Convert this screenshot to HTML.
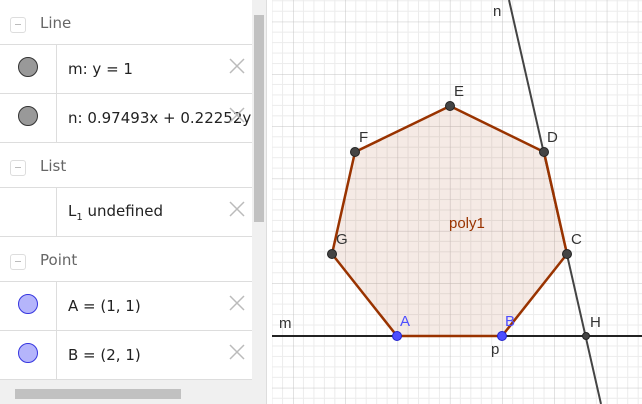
<!DOCTYPE html>
<html><head><style>
body{margin:0;width:642px;height:404px;overflow:hidden;font-family:"DejaVu Sans","Liberation Sans",sans-serif;background:#fff;position:relative}
.p{position:absolute;left:0;top:0;width:252px;height:404px;overflow:hidden}
.h{position:absolute;left:0;width:252px;height:44px;border-bottom:1px solid #ddd;color:#666;font-size:15px}
.h .b{position:absolute;left:10px;width:14px;height:14px;border:1px solid #ddd;border-radius:3px}
.h .b:after{content:"";position:absolute;left:4px;top:6px;width:6px;height:1px;background:#bbb}
.h span{position:absolute;left:40px}
.r{position:absolute;left:0;width:252px;border-bottom:1px solid #ddd}
.r .l{position:absolute;left:56px;top:0;bottom:0;border-left:1px solid #ddd}
.r .c{position:absolute;left:18px;width:18px;height:18px;border-radius:50%;border:1px solid #333;background:#999}
.r .c.bl{background:#b5b5fb;border-color:#3636e0}
.r .t{position:absolute;left:68px;font-size:15px;color:#222;white-space:nowrap}
.r .x{position:absolute;left:228px;width:18px;height:18px}
</style></head><body>
<div class="p">
<div class="h" style="top:0"><div class="b" style="top:17px"></div><span style="top:14px">Line</span></div>
<div class="r" style="top:45px;height:48px"><div class="l"></div><div class="c" style="top:12px"></div><div class="t" style="top:15px">m: y = 1</div><svg class="x" style="top:12px"><path d="M2 2L16 16M16 2L2 16" stroke="#bbb" stroke-width="1.5"/></svg></div>
<div class="r" style="top:94px;height:48px"><div class="l"></div><div class="c" style="top:12px"></div><div class="t" style="top:15px">n: 0.97493x + 0.22252y</div><svg class="x" style="top:12px"><path d="M2 2L16 16M16 2L2 16" stroke="#bbb" stroke-width="1.5"/></svg></div>
<div class="h" style="top:143px"><div class="b" style="top:17px"></div><span style="top:14px">List</span></div>
<div class="r" style="top:188px;height:48px"><div class="l"></div><div class="t" style="top:14px">L<sub style="font-size:10px">1</sub> undefined</div><svg class="x" style="top:12px"><path d="M2 2L16 16M16 2L2 16" stroke="#bbb" stroke-width="1.5"/></svg></div>
<div class="h" style="top:237px"><div class="b" style="top:17px"></div><span style="top:14px">Point</span></div>
<div class="r" style="top:282px;height:48px"><div class="l"></div><div class="c bl" style="top:12px"></div><div class="t" style="top:15px">A = (1, 1)</div><svg class="x" style="top:12px"><path d="M2 2L16 16M16 2L2 16" stroke="#bbb" stroke-width="1.5"/></svg></div>
<div class="r" style="top:331px;height:48px"><div class="l"></div><div class="c bl" style="top:12px"></div><div class="t" style="top:15px">B = (2, 1)</div><svg class="x" style="top:12px"><path d="M2 2L16 16M16 2L2 16" stroke="#bbb" stroke-width="1.5"/></svg></div>
</div>
<div style="position:absolute;left:0;top:380px;width:252px;height:24px;background:#f0f0f0"></div>
<div style="position:absolute;left:15px;top:389px;width:166px;height:10px;background:#c1c1c1"></div>
<div style="position:absolute;left:252px;top:0;width:14px;height:404px;background:#f0f0f0"></div>
<div style="position:absolute;left:254px;top:15px;width:10px;height:207px;background:#c1c1c1"></div>
<div style="position:absolute;left:266px;top:0;width:4px;height:404px;background:#fff;border-left:1px solid #ddd"></div>
<svg style="position:absolute;left:0;top:0" width="642" height="404">
<defs><pattern id="g" x="293" y="21.7" width="52.3" height="52.3" patternUnits="userSpaceOnUse">
<path d="M10.46 0V52.3M20.92 0V52.3M31.38 0V52.3M41.84 0V52.3M0 10.46H52.3M0 20.92H52.3M0 31.38H52.3M0 41.84H52.3" stroke="#ececec" stroke-width="1"/>
<path d="M0 0V52.3M0 0H52.3" stroke="#c4c4c4" stroke-width="1"/></pattern></defs>
<rect x="272" y="0" width="370" height="404" fill="url(#g)"/>
<line x1="272" y1="336" x2="642" y2="336" stroke="#222" stroke-width="2"/>
<line x1="509" y1="0" x2="601" y2="404" stroke="#444" stroke-width="2"/>
<polygon points="397,336 502,336 567,254 544,152 450,106 355,152 332,254" fill="rgba(153,51,0,0.1)" stroke="#993300" stroke-width="2.5"/>
<g fill="#444" stroke="#222"><circle cx="567" cy="254" r="4.5"/><circle cx="544" cy="152" r="4.5"/><circle cx="450" cy="106" r="4.5"/><circle cx="355" cy="152" r="4.5"/><circle cx="332" cy="254" r="4.5"/><circle cx="586" cy="336" r="3.5"/></g>
<g fill="#4d4dff" stroke="#2222cc"><circle cx="397" cy="336" r="4.5"/><circle cx="502" cy="336" r="4.5"/></g>
<g font-family="Liberation Sans,sans-serif" font-size="15" fill="#333">
<text x="454" y="96">E</text><text x="359" y="142">F</text><text x="547" y="142">D</text><text x="336" y="244">G</text><text x="571" y="244">C</text><text x="590" y="327">H</text><text x="279" y="328">m</text><text x="493" y="16">n</text><text x="491" y="354">p</text>
<text x="400" y="326" fill="#4d4dff">A</text><text x="505" y="326" fill="#4d4dff">B</text>
<text x="449" y="228" fill="#993300">poly1</text></g>
</svg>
</body></html>
